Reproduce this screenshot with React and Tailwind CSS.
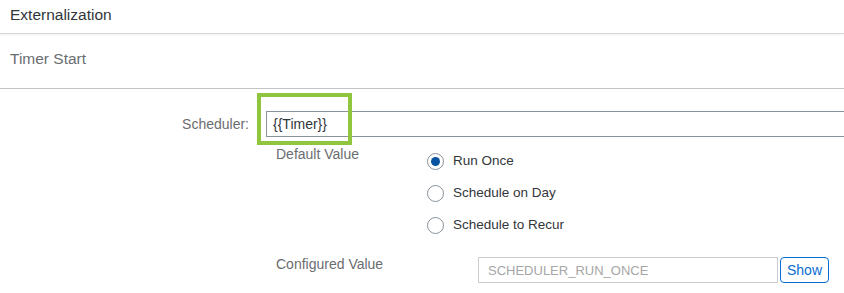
import React, { useState } from 'react';

const font = { fontFamily: '"Liberation Sans", Arial, sans-serif' };

const Radio = ({ label, checked, onSelect }) => (
  <label onClick={onSelect} className="flex items-center h-[32px] cursor-pointer">
    <span className="w-[17px] h-[17px] rounded-full border border-[#89919a] bg-white flex items-center justify-center">
      {checked && <span className="w-[9px] h-[9px] rounded-full bg-[#0854a0]" />}
    </span>
    <span className="ml-[9px] text-[13.5px] text-[#32363a]">{label}</span>
  </label>
);

const App = () => {
  const [mode, setMode] = useState('once');
  const [timer, setTimer] = useState('{{Timer}}');

  return (
    <div className="w-[844px] h-[293px] bg-white overflow-hidden" style={font}>
      <div className="h-[34px] flex items-center pl-[10px] pb-[4px] border-b border-[#d9d9d9] shadow-[0_1px_2px_rgba(0,0,0,0.06)]">
        <span className="text-[15.5px] text-[#32363a]">Externalization</span>
      </div>
      <div className="h-[55px] flex items-center pl-[10px] pb-[4px] border-b border-[#c4c4c4]">
        <span className="text-[15.5px] text-[#6a6d70]">Timer Start</span>
      </div>

      <div className="relative pt-[22px]">
        <div className="flex items-center">
          <label className="w-[249px] text-right text-[14px] text-[#6a6d70]">Scheduler:</label>
          <input
            value={timer}
            onChange={e => setTimer(e.target.value)}
            className="ml-[17px] flex-1 -mr-[4px] h-[26px] border border-[#89919a] px-[6px] text-[14px] text-[#32363a] outline-none"
          />
        </div>
        {/* highlight box */}
        <div className="absolute left-[257px] top-[4px] w-[95px] h-[52px] border-[4px] border-[#8fc63d] pointer-events-none" />

        <div className="flex pl-[276px] mt-[8px]">
          <div className="w-[151px] text-[14px] text-[#6a6d70] -mt-[1px]">Default Value</div>
          <div className="flex flex-col">
            <Radio label="Run Once" checked={mode === 'once'} onSelect={() => setMode('once')} />
            <Radio label="Schedule on Day" checked={mode === 'day'} onSelect={() => setMode('day')} />
            <Radio label="Schedule to Recur" checked={mode === 'recur'} onSelect={() => setMode('recur')} />
          </div>
        </div>

        <div className="flex pl-[276px] mt-[16px]">
          <div className="w-[202px] text-[14px] text-[#6a6d70] -mt-[3px]">Configured Value</div>
          <input
            readOnly
            value="SCHEDULER_RUN_ONCE"
            className="w-[300px] h-[26px] border border-[#c9cdd1] px-[9px] text-[13px] text-[#a6a6a6] outline-none"
          />
          <button className="ml-[2px] h-[26px] w-[49px] rounded-[4px] border border-[#0a6ed1] text-[14px] text-[#0a6ed1] bg-white">
            Show
          </button>
        </div>
      </div>
    </div>
  );
};

export default App;
